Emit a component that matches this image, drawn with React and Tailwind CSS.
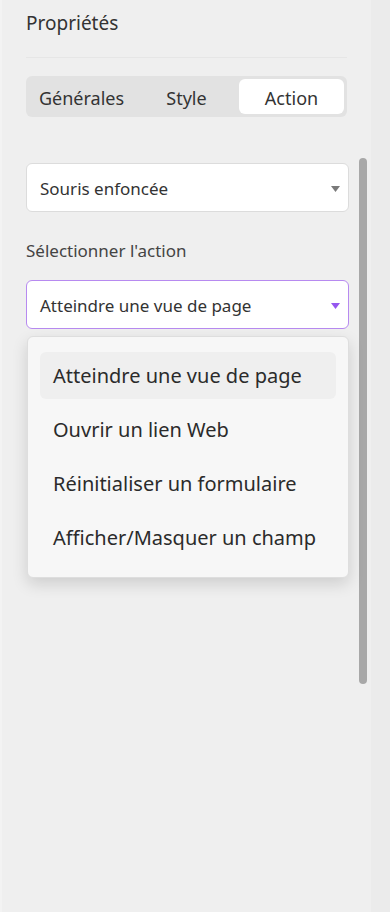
import { useState } from "react";

const TABS = ["Générales", "Style", "Action"];
const ACTIONS = [
  "Atteindre une vue de page",
  "Ouvrir un lien Web",
  "Réinitialiser un formulaire",
  "Afficher/Masquer un champ",
];

const Caret = ({ className }) => (
  <svg width="9" height="6" viewBox="0 0 9 6" className={className}>
    <path d="M0 0h9L4.5 6z" fill="currentColor" />
  </svg>
);

const App = () => {
  const [tab, setTab] = useState("Action");
  const [action, setAction] = useState(ACTIONS[0]);

  return (
    <div
      className="flex h-[912px] w-[390px] overflow-hidden bg-[#f3f3f3] pl-[2px] text-[#333]"
      style={{ fontFamily: '"Noto Sans", "Open Sans", sans-serif' }}
    >
      {/* Panneau des propriétés */}
      <div className="flex w-[369px] bg-[#efefef]">
        <div className="w-[345px] pl-[24px]">
          <h1 className="pt-[9px] text-[19px] leading-[28px] text-[#333]">
            Propriétés
          </h1>
          <div className="mt-[20px] h-px w-[321px] bg-[#e6e6e6]" />

          {/* Onglets */}
          <div className="mt-[18px] grid w-[321px] grid-cols-3 rounded-md bg-[#e2e2e2] p-[3px]">
            {TABS.map((t) => (
              <button
                key={t}
                onClick={() => setTab(t)}
                className={
                  "h-[35px] rounded-md pt-[3px] text-[18px] leading-[24px] text-[#333] " +
                  (tab === t ? "bg-white" : "")
                }
              >
                {t}
              </button>
            ))}
          </div>

          {/* Déclencheur */}
          <div className="mt-[46px] flex h-[49px] w-[323px] items-center justify-between rounded-md border border-[#dcdcdc] bg-white pl-[13px] pr-[8px] pt-[2px] text-[17px] text-[#333]">
            <span>Souris enfoncée</span>
            <Caret className="text-[#7a7a7a]" />
          </div>

          <p className="mt-[28px] text-[17px] leading-[22px] text-[#444]">
            Sélectionner l'action
          </p>

          {/* Action */}
          <div className="relative mt-[18px] w-[323px]">
            <div className="flex h-[49px] items-center justify-between rounded-md border-[1.5px] border-[#b78af0] bg-white pl-[13px] pr-[8px] pt-[2px] text-[17px] text-[#333]">
              <span>{action}</span>
              <Caret className="text-[#9557ef]" />
            </div>

            <ul className="absolute left-[1px] top-[56px] flex w-[322px] flex-col gap-[7px] rounded-md border border-[#dedede] bg-[#f7f7f7] px-[12px] pb-[16px] pt-[15px] shadow-[0_6px_16px_rgba(0,0,0,0.14)]">
              {ACTIONS.map((a) => (
                <li
                  key={a}
                  onClick={() => setAction(a)}
                  className={
                    "flex h-[47px] items-center rounded-md pl-[13px] text-[20px] text-[#2b2b2b] " +
                    (a === action ? "bg-[#efefef]" : "")
                  }
                >
                  {a}
                </li>
              ))}
            </ul>
          </div>
        </div>

        {/* Barre de défilement */}
        <div className="pl-[12px] pt-[158px]">
          <div className="h-[526px] w-[8px] rounded-full bg-[#a8a8a8]" />
        </div>
      </div>
      <div className="flex-1 bg-[#ebebeb]" />
    </div>
  );
};

export default App;
